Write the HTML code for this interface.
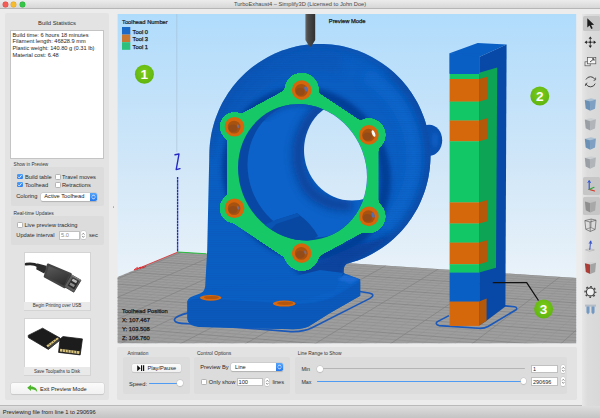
<!DOCTYPE html>
<html><head><meta charset="utf-8"><title>TurboExhaust4 – Simplify3D</title>
<style>
html,body{margin:0;padding:0;}
body{width:600px;height:418px;overflow:hidden;background:#ececec;font-family:"Liberation Sans",sans-serif;color:#222;position:relative;}
.abs{position:absolute;}
.t{position:absolute;white-space:nowrap;line-height:1;}

.tb{left:0;top:0;width:600px;height:9px;background:linear-gradient(#ececec,#d7d7d7);border-bottom:1px solid #b6b6b6;box-sizing:border-box;}
.dot{position:absolute;width:5px;height:5px;border-radius:50%;top:1.9px;margin-left:0.2px;}
.gb{position:absolute;background:#e3e3e3;border-radius:2px;}
.gb2{position:absolute;background:#dcdcdc;border-radius:2px;}
.wb{position:absolute;background:#fff;border:0.6px solid #c4c4c4;box-sizing:border-box;}
.cb{position:absolute;width:5.6px;height:5.6px;border-radius:1.2px;box-sizing:border-box;}
.cb.on{background:linear-gradient(#4da0f8,#2a7df0);}
.cb.off{background:#fff;border:0.6px solid #b4b4b4;width:5.8px;height:5.8px;margin:-0.1px;}
.sel{position:absolute;background:#fff;border-radius:1.8px;box-shadow:0 0 0 0.5px #c2c2c2,0 0.5px 0.8px rgba(0,0,0,.25);}
.selb{position:absolute;right:0;top:0;bottom:0;width:7px;border-radius:0 1.8px 1.8px 0;background:linear-gradient(#55a4fa,#2478ee);}
.inp{position:absolute;background:#fff;border:0.5px solid #c0c0c0;box-sizing:border-box;}
.btn{position:absolute;background:linear-gradient(#fbfbfb,#f1f1f1);border-radius:1.8px;box-shadow:0 0 0 0.5px #cfcfcf,0 0.5px 0.7px rgba(0,0,0,.14);}
.knob{position:absolute;width:5.9px;height:5.9px;margin:0.55px;border-radius:50%;background:#fff;box-shadow:0 0 0 0.4px #c6c6c6,0 0.5px 1px rgba(0,0,0,.3);}
.stp{position:absolute;width:4.6px;height:8.6px;border-radius:1.5px;background:#fff;box-shadow:0 0 0 0.4px #c4c4c4,0 0.4px 0.6px rgba(0,0,0,.2);}

</style></head><body>
<div class="abs tb"></div>
<div class="dot" style="left:3.3px;background:#f45d56;box-shadow:0 0 0 0.4px #d9433d;"></div>
<div class="dot" style="left:11.3px;background:#f7bb2e;box-shadow:0 0 0 0.4px #d99f1f;"></div>
<div class="dot" style="left:19.9px;background:#35c648;box-shadow:0 0 0 0.4px #22a634;"></div>
<div class="t" style="left:200px;width:200px;text-align:center;top:2.01px;font-size:5.69px;color:#484848;font-weight:normal;">TurboExhaust4 – Simplify3D (Licensed to John Doe)</div>
<div class="gb" style="left:5px;top:13px;width:104px;height:386.5px;"></div>
<div class="t" style="left:-43px;width:200px;text-align:center;top:21.03px;font-size:5.84px;color:#2c2c2c;font-weight:normal;">Build Statistics</div>
<div class="wb" style="left:10.3px;top:29.5px;width:93.7px;height:129px;"></div>
<div class="t" style="left:12.6px;top:32.54px;font-size:5.65px;color:#1e1e1e;font-weight:normal;">Build time: 6 hours 18 minutes</div>
<div class="t" style="left:12.6px;top:39.24px;font-size:5.65px;color:#1e1e1e;font-weight:normal;">Filament length: 46828.9 mm</div>
<div class="t" style="left:12.6px;top:45.94px;font-size:5.65px;color:#1e1e1e;font-weight:normal;">Plastic weight: 140.80 g (0.31 lb)</div>
<div class="t" style="left:12.6px;top:52.64px;font-size:5.65px;color:#1e1e1e;font-weight:normal;">Material cost: 6.48</div>
<div class="t" style="left:13.5px;top:162.97px;font-size:4.7px;color:#333;font-weight:normal;">Show in Preview</div>
<div class="gb2" style="left:10.5px;top:167.3px;width:93.3px;height:38.7px;"></div>
<div class="cb on" style="left:17.2px;top:173.80px;"><svg class="abs" style="left:0;top:0" width="5.6" height="5.6" viewBox="0 0 56 56"><path d="M12 29 L23 41 L44 14" fill="none" stroke="#fff" stroke-width="8" stroke-linecap="round" stroke-linejoin="round"/></svg></div>
<div class="t" style="left:25px;top:174.71px;font-size:5.7px;color:#2a2a2a;font-weight:normal;">Build table</div>
<div class="cb off" style="left:54.8px;top:173.80px;"></div>
<div class="t" style="left:62px;top:174.71px;font-size:5.7px;color:#2a2a2a;font-weight:normal;">Travel moves</div>
<div class="cb on" style="left:17.2px;top:181.90px;"><svg class="abs" style="left:0;top:0" width="5.6" height="5.6" viewBox="0 0 56 56"><path d="M12 29 L23 41 L44 14" fill="none" stroke="#fff" stroke-width="8" stroke-linecap="round" stroke-linejoin="round"/></svg></div>
<div class="t" style="left:25px;top:182.81px;font-size:5.7px;color:#2a2a2a;font-weight:normal;">Toolhead</div>
<div class="cb off" style="left:54.8px;top:181.90px;"></div>
<div class="t" style="left:62px;top:182.81px;font-size:5.7px;color:#2a2a2a;font-weight:normal;">Retractions</div>
<div class="t" style="left:16.2px;top:194.41px;font-size:5.7px;color:#2a2a2a;font-weight:normal;">Coloring</div>
<div class="sel" style="left:40.8px;top:192.5px;width:56.2px;height:8px;"><div class="t" style="left:3.5px;top:1.81px;font-size:5.7px;color:#222;">Active Toolhead</div><div class="selb"><svg class="abs" style="left:0;top:0" width="7" height="8" viewBox="0 0 70 80"><path d="M22 32 L35 18 L48 32 M22 48 L35 62 L48 48" fill="none" stroke="#fff" stroke-width="8" stroke-linecap="round" stroke-linejoin="round"/></svg></div></div>
<div class="t" style="left:13.5px;top:211.98px;font-size:4.85px;color:#333;font-weight:normal;">Real-time Updates</div>
<div class="gb2" style="left:10.5px;top:216.3px;width:93.3px;height:29px;"></div>
<div class="cb off" style="left:17px;top:221.80px;"></div>
<div class="t" style="left:24.4px;top:222.71px;font-size:5.7px;color:#2a2a2a;font-weight:normal;">Live preview tracking</div>
<div class="t" style="left:16.3px;top:233.31px;font-size:5.7px;color:#2a2a2a;font-weight:normal;">Update interval</div>
<div class="inp" style="left:58.8px;top:230.7px;width:20.8px;height:9px;"></div>
<div class="t" style="left:61px;top:233.31px;font-size:5.7px;color:#8a8a8a;font-weight:normal;">5.0</div>
<div class="stp" style="left:81.2px;top:230.90px;"><svg class="abs" style="left:0;top:0" width="4.6" height="8.6" viewBox="0 0 46 86"><path d="M13 34 L23 22 L33 34 M13 52 L23 64 L33 52" fill="none" stroke="#555" stroke-width="6" stroke-linecap="round" stroke-linejoin="round"/></svg></div>
<div class="t" style="left:89px;top:233.31px;font-size:5.7px;color:#2a2a2a;font-weight:normal;">sec</div>
<div class="abs" style="left:23.5px;top:251.5px;width:67px;height:59.2px;background:#fff;border:1px solid #d4d4d4;box-sizing:border-box;"></div>
<div class="abs" style="left:24.1px;top:302px;width:65.8px;height:8.1px;background:#e9e9e9;"></div>
<div class="t" style="left:-43px;width:200px;text-align:center;top:304.48px;font-size:4.5px;color:#333;font-weight:normal;">Begin Printing over USB</div>
<svg class="abs" style="left:24px;top:252px" width="66" height="50" viewBox="0 0 66 50">
<defs><linearGradient id="ug" x1="0" y1="0" x2="0.4" y2="1"><stop offset="0" stop-color="#5e5e5e"/><stop offset="1" stop-color="#2e2e2e"/></linearGradient></defs>
<path d="M2.2 12.2 C7 11.4 11 12 14.5 14 C17.5 15.6 20 17.2 23 18" fill="none" stroke="#262626" stroke-width="2.8" stroke-linecap="round"/>
<path d="M13.5 12.2 L22 14.5 L20 20.6 L13 17 Z" fill="#2c2c2c" stroke="#2c2c2c" stroke-width="1.4" stroke-linejoin="round"/>
<path d="M24 12.6 L46.6 22 L40.6 35.2 L20.8 24.6 Z" fill="url(#ug)" stroke="#444" stroke-width="2.2" stroke-linejoin="round"/>
<path d="M47.2 22.6 L57 28.2 L49.8 40.2 L40.2 34.6 Z" fill="#5c5c5c" stroke="#333" stroke-width="0.8" stroke-linejoin="round"/>
<path d="M48.6 25.4 L55 29.1 L50.2 37.4 L43.6 33.6 Z" fill="#2a2a2a"/>
<path d="M48.9 26.6 L53.3 29.1 L52.1 31.2 L47.7 28.7 Z" fill="#b8b8b8"/>
<path d="M46.6 30.6 L51 33.1 L49.8 35.2 L45.4 32.7 Z" fill="#8a8a8a"/>
<path d="M47.4 23.1 L56.4 28.3" stroke="#a4a4a4" stroke-width="0.7"/>
</svg>
<div class="abs" style="left:23.5px;top:317.5px;width:67px;height:58.2px;background:#fff;border:1px solid #d4d4d4;box-sizing:border-box;"></div>
<div class="abs" style="left:24.1px;top:366.6px;width:65.8px;height:8.5px;background:#e9e9e9;"></div>
<div class="t" style="left:-43px;width:200px;text-align:center;top:369.75px;font-size:4.55px;color:#333;font-weight:normal;">Save Toolpaths to Disk</div>
<svg class="abs" style="left:24px;top:318px" width="66" height="48" viewBox="0 0 66 48">
<path d="M4.2 17.4 L18.6 10.2 L36 20 L35.4 22.6 L24.4 31.4 L4.4 19.6 Z" fill="#1c1c1c" stroke="#1c1c1c" stroke-width="0.8" stroke-linejoin="round"/>
<path d="M24.2 29 L35 20.6 L35.4 22.6 L24.6 31.2 Z" fill="#444"/>
<path d="M22.4 27.6 L33.4 19.6 L34.8 20.8 L23.8 29.2 Z" fill="#d9c47a"/>
<path d="M24.6 26 l1.1 1.3 M26.8 24.4 l1.1 1.3 M29 22.8 l1.1 1.3 M31.2 21.2 l1.1 1.3" stroke="#1c1c1c" stroke-width="0.6"/>
<path d="M39 18.6 L58.4 20.9 L56.2 36.9 L34.6 34.4 L36 21 Z" fill="#1c1c1c" stroke="#1c1c1c" stroke-width="0.8" stroke-linejoin="round"/>
<path d="M36.2 30.8 L55.6 33.2 L55.2 36 L35.8 33.6 Z" fill="#d9c47a"/>
<path d="M38.6 31.2 v2.8 M41.4 31.5 v2.8 M44.2 31.9 v2.8 M47 32.2 v2.8 M49.8 32.6 v2.8 M52.6 32.9 v2.8" stroke="#1c1c1c" stroke-width="0.6"/>
</svg>
<div class="btn" style="left:10.8px;top:383px;width:93px;height:10.6px;"></div>
<svg class="abs" style="left:26px;top:383px" width="13" height="11" viewBox="0 0 130 110"><path d="M12 48 L50 18 L50 36 C90 36 112 58 112 92 C100 70 84 62 50 62 L50 80 Z" fill="#4db52c"/></svg>
<div class="t" style="left:40px;top:386.64px;font-size:5.65px;color:#222;font-weight:normal;">Exit Preview Mode</div>
<div class="abs" style="left:0;top:405px;width:600px;height:13px;background:linear-gradient(#dedede,#c4c4c4);border-top:0.6px solid #b9b9b9;box-sizing:border-box;"></div>
<div class="t" style="left:2.8px;top:410.06px;font-size:5.78px;color:#222;font-weight:normal;">Previewing file from line 1 to 290696</div>
<div class="gb" style="left:117px;top:346.5px;width:459.5px;height:53px;background:#e2e2e2;"></div>
<div class="t" style="left:127.4px;top:352.27px;font-size:4.7px;color:#333;font-weight:normal;">Animation</div>
<div class="gb2" style="left:122.7px;top:356.5px;width:67.1px;height:37.1px;"></div>
<div class="btn" style="left:132.3px;top:364px;width:48.6px;height:8.4px;"></div>
<svg class="abs" style="left:136.6px;top:364.9px" width="8" height="6.6" viewBox="0 0 80 66"><path d="M2 3 L36 33 L2 63 Z M40 3 H52 V63 H40 Z M60 3 H72 V63 H60 Z" fill="#111"/></svg>
<div class="t" style="left:147.4px;top:366.31px;font-size:5.7px;color:#222;font-weight:normal;">Play/Pause</div>
<div class="t" style="left:129px;top:381.51px;font-size:5.7px;color:#2a2a2a;font-weight:normal;">Speed:</div>
<div class="abs" style="left:148.6px;top:382.6px;width:30px;height:1.9px;background:#4f9af2;border-radius:1px;"></div>
<div class="knob" style="left:176.8px;top:379.9px;"></div>
<div class="t" style="left:197px;top:352.13px;font-size:4.95px;color:#333;font-weight:normal;">Control Options</div>
<div class="gb2" style="left:194.2px;top:356.5px;width:95.7px;height:37.1px;"></div>
<div class="t" style="left:200.2px;top:364.91px;font-size:5.7px;color:#2a2a2a;font-weight:normal;">Preview By</div>
<div class="sel" style="left:231px;top:362.9px;width:51.6px;height:8px;"><div class="t" style="left:4px;top:1.81px;font-size:5.7px;color:#222;">Line</div><div class="selb"><svg class="abs" style="left:0;top:0" width="7" height="8" viewBox="0 0 70 80"><path d="M22 32 L35 18 L48 32 M22 48 L35 62 L48 48" fill="none" stroke="#fff" stroke-width="8" stroke-linecap="round" stroke-linejoin="round"/></svg></div></div>
<div class="cb off" style="left:201px;top:379.10px;"></div>
<div class="t" style="left:208.8px;top:380.01px;font-size:5.7px;color:#2a2a2a;font-weight:normal;">Only show</div>
<div class="inp" style="left:236.7px;top:377.6px;width:26.3px;height:8.4px;"></div>
<div class="t" style="left:238.5px;top:380.01px;font-size:5.7px;color:#222;font-weight:normal;">100</div>
<div class="stp" style="left:264.8px;top:377.60px;"><svg class="abs" style="left:0;top:0" width="4.6" height="8.6" viewBox="0 0 46 86"><path d="M13 34 L23 22 L33 34 M13 52 L23 64 L33 52" fill="none" stroke="#555" stroke-width="6" stroke-linecap="round" stroke-linejoin="round"/></svg></div>
<div class="t" style="left:272.4px;top:380.01px;font-size:5.7px;color:#2a2a2a;font-weight:normal;">lines</div>
<div class="t" style="left:297.8px;top:352.18px;font-size:4.85px;color:#333;font-weight:normal;">Line Range to Show</div>
<div class="gb2" style="left:295.2px;top:356.5px;width:272.3px;height:37.1px;"></div>
<div class="t" style="left:301.4px;top:367.13px;font-size:5.3px;color:#2a2a2a;font-weight:normal;">Min</div>
<div class="abs" style="left:320px;top:368.3px;width:205px;height:1.1px;background:#b5b5b5;border-radius:1px;"></div>
<div class="knob" style="left:316.5px;top:365.3px;"></div>
<div class="inp" style="left:530.5px;top:364.5px;width:27.5px;height:8.5px;"></div>
<div class="t" style="left:533px;top:367.02px;font-size:5.5px;color:#222;font-weight:normal;">1</div>
<div class="stp" style="left:560.5px;top:364.50px;"><svg class="abs" style="left:0;top:0" width="4.6" height="8.6" viewBox="0 0 46 86"><path d="M13 34 L23 22 L33 34 M13 52 L23 64 L33 52" fill="none" stroke="#555" stroke-width="6" stroke-linecap="round" stroke-linejoin="round"/></svg></div>
<div class="t" style="left:301.4px;top:379.73px;font-size:5.3px;color:#2a2a2a;font-weight:normal;">Max</div>
<div class="abs" style="left:317px;top:380.6px;width:204px;height:1.9px;background:#4f9af2;border-radius:1px;"></div>
<div class="knob" style="left:520px;top:377.9px;"></div>
<div class="inp" style="left:530.5px;top:377px;width:27.5px;height:8.5px;"></div>
<div class="t" style="left:533px;top:379.62px;font-size:5.5px;color:#222;font-weight:normal;">290696</div>
<div class="stp" style="left:560.5px;top:377.10px;"><svg class="abs" style="left:0;top:0" width="4.6" height="8.6" viewBox="0 0 46 86"><path d="M13 34 L23 22 L33 34 M13 52 L23 64 L33 52" fill="none" stroke="#555" stroke-width="6" stroke-linecap="round" stroke-linejoin="round"/></svg></div>
<div class="abs" style="left:112.9px;top:206.3px;width:1.6px;height:1.6px;border-radius:50%;background:#a8a8a8;"></div>
<div class="abs" style="left:582px;top:13.5px;width:18px;height:392px;background:linear-gradient(90deg,#e6e6e6,#dcdcdc 30%,#d8d8d8);"></div>
<div class="abs" style="left:582.7px;top:15.6px;width:17.3px;height:15.8px;background:#c6c6c6;border-radius:1.5px;"></div>
<div class="abs" style="left:582.7px;top:176.8px;width:17.3px;height:18.5px;background:#c6c6c6;border-radius:1.5px;"></div>
<div class="abs" style="left:582.7px;top:196.7px;width:17.3px;height:18.3px;background:#c6c6c6;border-radius:1.5px;"></div>
<svg class="abs" style="left:580px;top:13px" width="20" height="387" viewBox="580 13 20 387">
<path d="M587.3 18.2 L587.3 27.6 L589.6 25.6 L591.2 29 L592.7 28.3 L591.1 25 L594.1 24.8 Z" fill="#1c1c1c"/>
<g fill="#222" stroke="#222" stroke-width="0.7"><path d="M590.3 36.4 L592 38.8 H588.6 Z M590.3 48 L592 45.6 H588.6 Z M584.5 42.2 L586.9 40.5 V43.9 Z M596.1 42.2 L593.7 40.5 V43.9 Z" stroke="none"/><path d="M590.3 38.5 V45.9 M586.6 42.2 H594"/><circle cx="590.3" cy="42.2" r="1" stroke="none"/></g>
<g fill="none" stroke="#555" stroke-width="0.7"><rect x="585" y="61.8" width="5.2" height="4" fill="#e8e8e8"/><rect x="587.6" y="57.4" width="8.2" height="6.4" fill="#f4f4f4"/><path d="M590 62 L593.8 59" stroke="#222" stroke-width="0.8"/><path d="M592 58.8 H594 V60.8" stroke="#222" stroke-width="0.8"/></g>
<g fill="none" stroke="#444" stroke-width="1"><path d="M586 79.5 A5 5 0 0 1 595 79.6"/><path d="M595.2 83.6 A5 5 0 0 1 586 84"/><path d="M593.6 80.6 L595.6 79.8 L595.6 77.6" stroke-width="0.8"/><path d="M587.4 83 L585.6 83.8 L585.4 86" stroke-width="0.8"/></g>
<g transform="translate(590.3,104.5) scale(1.28)"><path d="M-4.3 -3.6 L0.6 -4.8 L4.4 -3.9 L-0.3 -2.5 Z" fill="#adc2d4"/><path d="M-4.3 -3.6 L-0.3 -2.5 L-0.1 4.9 L-3.6 3.2 Z" fill="#6a90b6"/><path d="M-0.3 -2.5 L4.4 -3.9 L3.7 3.3 L-0.1 4.9 Z" fill="#7fa0c2"/></g>
<g transform="translate(590.3,124.2) scale(1.28)"><path d="M-4.3 -3.6 L0.6 -4.8 L4.4 -3.9 L-0.3 -2.5 Z" fill="#cdd0d3"/><path d="M-4.3 -3.6 L-0.3 -2.5 L-0.1 4.9 L-3.6 3.2 Z" fill="#9a9fa5"/><path d="M-0.3 -2.5 L4.4 -3.9 L3.7 3.3 L-0.1 4.9 Z" fill="#b1b5ba"/></g>
<g transform="translate(590.3,143.4) scale(1.28)"><path d="M-4.3 -3.6 L0.6 -4.8 L4.4 -3.9 L-0.3 -2.5 Z" fill="#adc2d4"/><path d="M-4.3 -3.6 L-0.3 -2.5 L-0.1 4.9 L-3.6 3.2 Z" fill="#6a90b6"/><path d="M-0.3 -2.5 L4.4 -3.9 L3.7 3.3 L-0.1 4.9 Z" fill="#7fa0c2"/></g>
<g transform="translate(590.3,162.4) scale(1.28)"><path d="M-4.3 -3.6 L0.6 -4.8 L4.4 -3.9 L-0.3 -2.5 Z" fill="#cdd0d3"/><path d="M-4.3 -3.6 L-0.3 -2.5 L-0.1 4.9 L-3.6 3.2 Z" fill="#9a9fa5"/><path d="M-0.3 -2.5 L4.4 -3.9 L3.7 3.3 L-0.1 4.9 Z" fill="#b1b5ba"/></g>
<g fill="none" stroke-width="1.1" stroke-linecap="round"><path d="M589.2 189.4 V181.2" stroke="#2a4fd0"/><path d="M589.2 189.4 L594.6 191" stroke="#d23a2a"/><path d="M589.2 189.4 L594 187.2" stroke="#2aa83a"/><path d="M587.9 182.6 L589.2 180.4 L590.5 182.6" stroke="#2a4fd0" stroke-width="0.8"/></g>
<g transform="translate(590.4,206.2) scale(1.28)"><path d="M-4.3 -3.6 L0.6 -4.8 L4.4 -3.9 L-0.3 -2.5 Z" fill="#c2c2c2"/><path d="M-4.3 -3.6 L-0.3 -2.5 L-0.1 4.9 L-3.6 3.2 Z" fill="#8e8e8e"/><path d="M-0.3 -2.5 L4.4 -3.9 L3.7 3.3 L-0.1 4.9 Z" fill="#a8a8a8"/></g>
<g transform="translate(590.4,225.2) scale(1.28)" fill="none" stroke="#555" stroke-width="0.5"><path d="M-4.3 -3.6 L0.6 -4.8 L4.4 -3.9 L-0.3 -2.5 Z"/><path d="M-4.3 -3.6 L-3.6 3.2 L-0.1 4.9 L-0.3 -2.5"/><path d="M4.4 -3.9 L3.7 3.3 L-0.1 4.9"/><path d="M0.6 -4.8 L0.4 1.8 L-3.6 3.2 M0.4 1.8 L3.7 3.3" stroke-width="0.4"/></g>
<g fill="none" stroke-linecap="round"><path d="M585.8 249.8 L590 248.6 L594.4 250 L590 251.2 Z" stroke="#9a9a9a" stroke-width="0.4" fill="#d4d4d4"/><path d="M589.8 249.6 L590.6 241.6" stroke="#2c48c8" stroke-width="0.9"/><path d="M589.3 243.4 L590.7 240.8 L591.7 243.6" stroke="#2c48c8" stroke-width="0.8"/></g>
<g transform="translate(590.4,267.8) scale(1.28)"><path d="M-4.3 -3.6 L0.6 -4.8 L4.4 -3.9 L-0.3 -2.5 Z" fill="#d4d4d4"/><path d="M-4.3 -3.6 L-0.3 -2.5 L-0.1 4.9 L-3.6 3.2 Z" fill="#ac3c36"/><path d="M-0.3 -2.5 L4.4 -3.9 L3.7 3.3 L-0.1 4.9 Z" fill="#a4a4a4"/></g>
<g transform="translate(590.4,291.9)"><circle r="4" fill="#f0f0f0" stroke="#444" stroke-width="1.15"/><circle r="5.3" fill="none" stroke="#444" stroke-width="1.4" stroke-dasharray="1.85 2.31" stroke-dashoffset="0.9"/></g>
<g><path d="M585 304.6 H596 V306.6 H585 Z" fill="#b4bcc6"/><path d="M586.4 306.6 H589.6 V312.6 L588 314.4 L586.4 312.6 Z M591.4 306.6 H594.6 V312.6 L593 314.4 L591.4 312.6 Z" fill="#7ea0c6"/><path d="M588 306.6 V313 M593 306.6 V313" stroke="#5580b0" stroke-width="0.5"/></g>
</svg>
<svg class="abs" style="left:0;top:0" width="600" height="418" viewBox="0 0 600 418">
<defs>
<clipPath id="vw"><rect x="117.6" y="14" width="458.6" height="329.3"/></clipPath>
<pattern id="lay" width="4" height="2.2" patternUnits="userSpaceOnUse"><rect width="4" height="0.9" fill="#04306e"/></pattern>
<linearGradient id="sky" gradientUnits="userSpaceOnUse" x1="0" y1="14" x2="0" y2="275"><stop offset="0" stop-color="#b0dcfc"/><stop offset="0.55" stop-color="#cfe6f8"/><stop offset="1" stop-color="#e9f2f9"/></linearGradient>
<linearGradient id="noz" x1="0" y1="0" x2="1" y2="0"><stop offset="0" stop-color="#6a6a6a"/><stop offset="0.25" stop-color="#4c4c4c"/><stop offset="1" stop-color="#303030"/></linearGradient>
<filter id="goo" x="-10%" y="-10%" width="120%" height="120%"><feGaussianBlur stdDeviation="1.8"/><feColorMatrix values="1 0 0 0 0 0 1 0 0 0 0 0 1 0 0 0 0 0 22 -10.5"/></filter>
<filter id="b1" x="-20%" y="-20%" width="140%" height="140%"><feGaussianBlur stdDeviation="1"/></filter>
<filter id="b2" x="-20%" y="-20%" width="140%" height="140%"><feGaussianBlur stdDeviation="2.2"/></filter>
<filter id="b4" x="-30%" y="-30%" width="160%" height="160%"><feGaussianBlur stdDeviation="4.5"/></filter>
<filter id="b7" x="-30%" y="-30%" width="160%" height="160%"><feGaussianBlur stdDeviation="7"/></filter>
<radialGradient id="num" cx="0.5" cy="0.4" r="0.6"><stop offset="0" stop-color="#7ccc1c"/><stop offset="1" stop-color="#5fb40e"/></radialGradient>
</defs>
<g clip-path="url(#vw)">
<rect x="117" y="13" width="460" height="331" fill="url(#sky)"/>
<path d="M176.8 14 V152" stroke="#9fb4c8" stroke-width="0.6" opacity="0.8"/>
<clipPath id="flc"><path d="M178 252 L577 278 L577 344 L117 344 L117 277.2 Z"/></clipPath>
<g clip-path="url(#flc)">
<rect x="117" y="250" width="460" height="95" fill="#9e9e9e"/>
<path d="M173.4 253.9L712.7 289.1M168.7 255.9L710.6 291.5M163.9 257.8L708.5 293.8M159.1 259.8L706.3 296.2M149.4 263.8L701.9 301.0M144.4 265.9L699.7 303.5M139.4 268.0L697.5 306.0M134.4 270.0L695.2 308.5M124.1 274.3L690.6 313.6M118.9 276.4L688.2 316.2M113.6 278.6L685.8 318.9M108.3 280.8L683.4 321.5M97.4 285.3L678.5 327.0M91.9 287.6L676.0 329.7M86.3 289.9L673.5 332.5M80.7 292.2L670.9 335.4M69.2 297.0L665.7 341.2M63.4 299.4L663.0 344.1M57.5 301.8L660.3 347.1M51.5 304.3L657.6 350.1M39.3 309.3L652.0 356.3M33.2 311.9L649.2 359.4M26.9 314.5L646.3 362.6M20.6 317.1L643.4 365.9M7.7 322.4L637.4 372.4M1.1 325.1L634.4 375.8M-5.5 327.9L631.3 379.2M-12.3 330.7L628.2 382.7M-26.0 336.3L621.8 389.7M-33.0 339.2L618.6 393.3M-40.0 342.1L615.3 397.0M-47.2 345.1L611.9 400.7M-61.8 351.1L605.1 408.2M-69.2 354.2L601.6 412.1M-76.8 357.3L598.0 416.0M-84.4 360.5L594.4 420.0M-100.0 366.9L587.1 428.1M-108.0 370.2L583.3 432.3M-116.0 373.6L579.5 436.5M-124.2 376.9L575.6 440.8M-140.8 383.8L567.7 449.6M-149.3 387.3L563.6 454.1M-158.0 390.9L559.5 458.7M-166.7 394.5L555.3 463.3M-184.6 401.9L546.7 472.8M-193.7 405.7L542.4 477.7M-203.0 409.5L537.9 482.6M-212.4 413.4L533.3 487.6M-231.6 421.3L524.0 498.0M-241.4 425.4L519.2 503.3M-251.4 429.5L514.4 508.6M-261.5 433.7L509.4 514.1M-282.2 442.3L499.3 525.3" stroke="#8b8b8b" stroke-width="0.55" fill="none"/>
<path d="M188.4 252.7L-274.8 446.7M195.2 253.1L-265.3 447.7M202.1 253.6L-255.6 448.8M209.1 254.0L-245.8 449.8M223.5 255.0L-225.6 452.0M230.8 255.4L-215.3 453.1M238.3 255.9L-204.8 454.2M245.9 256.4L-194.1 455.4M261.4 257.4L-172.2 457.7M269.4 257.9L-160.9 458.9M277.5 258.5L-149.4 460.1M285.7 259.0L-137.8 461.4M302.6 260.1L-113.8 464.0M311.2 260.6L-101.5 465.3M320.0 261.2L-88.9 466.6M329.0 261.8L-76.2 468.0M347.3 263.0L-49.9 470.8M356.7 263.6L-36.3 472.2M366.3 264.2L-22.5 473.7M376.1 264.9L-8.5 475.2M396.1 266.2L20.5 478.3M406.4 266.8L35.5 479.9M416.9 267.5L50.7 481.6M427.6 268.2L66.3 483.2M449.6 269.6L98.4 486.7M460.9 270.4L115.0 488.4M472.5 271.1L131.9 490.2M484.2 271.9L149.2 492.1M508.5 273.4L185.0 495.9M521.0 274.3L203.4 497.9M533.7 275.1L222.4 499.9M546.7 275.9L241.7 502.0M573.6 277.7L281.8 506.3M587.4 278.6L302.5 508.5M601.6 279.5L323.8 510.8M616.0 280.4L345.6 513.1" stroke="#939393" stroke-width="0.4" fill="none"/>
<path d="M178.0 252.0L714.8 286.8M154.3 261.8L704.1 298.6M129.3 272.2L692.9 311.0M102.9 283.1L681.0 324.2M75.0 294.6L668.3 338.3M45.5 306.8L654.8 353.2M14.2 319.7L640.4 369.1M-19.1 333.5L625.0 386.2M-54.4 348.1L608.5 404.4M-92.2 363.7L590.8 424.0M-132.4 380.4L571.7 445.2M-175.6 398.2L551.1 468.0M-221.9 417.3L528.7 492.8M-271.8 438.0L504.4 519.7M181.6 252.2L-284.2 445.7M216.2 254.5L-235.8 450.9M253.6 256.9L-183.2 456.5M294.1 259.5L-125.9 462.7M338.0 262.4L-63.1 469.4M386.0 265.5L5.9 476.8M438.5 268.9L82.2 484.9M496.2 272.7L166.9 494.0M560.0 276.8L261.5 504.1M630.8 281.4L367.9 515.5" stroke="#818181" stroke-width="0.7" fill="none"/>
</g>
<path d="M178 252 L134.3 270.1" stroke="#e0282c" stroke-width="0.8"/>
<path d="M134 269.8 l3.4 -2.4 l-0.6 2 l3.6 -2.4 l-0.4 1.6 l3.4 -2 l-0.6 1.4 l3.4 -1.8" stroke="#e0282c" stroke-width="0.9" fill="none" stroke-linejoin="round"/>
<path d="M178 252 L206.5 253.8" stroke="#18c030" stroke-width="0.9"/>
<path d="M177.6 177 V252" stroke="#2428c4" stroke-width="1.35" stroke-dasharray="2.6 0.5"/>
<path d="M175 154.8 L179 154 L176.2 169.6 L180 168.6" stroke="#2428c4" stroke-width="1.4" fill="none" stroke-linejoin="round" stroke-linecap="round"/>
<g fill="none" stroke="#1a58ba" stroke-width="1.6" stroke-linejoin="round">
<path d="M189 312.6 C181 314.5 173.2 317.6 174.6 320.6 C175.8 323.2 181 323.3 188 323.7 L288 331.4 C299 332.2 305 331.2 312 327.8 L369.5 298.6 C374 296.4 374 293.8 369 293 L358 291.2"/>
<path d="M449 315.6 L437.4 321.6 C435.6 322.8 436 324.6 439 325.6 L478.5 328.3 C483 328.6 485 328.2 488 326.5 L515.6 310 C517.4 308.8 517 307.3 514.6 306.8 L503 305.6"/>
</g>
<clipPath id="bodyc"><path d="M209.3 155.5 L209.4 151.6 L209.6 147.7 L209.9 143.8 L210.4 140.0 L211.0 136.1 L211.7 132.3 L212.6 128.5 L213.6 124.7 L214.7 121.0 L216.0 117.3 L217.4 113.7 L218.9 110.1 L220.5 106.6 L222.2 103.1 L224.1 99.7 L226.1 96.4 L228.2 93.1 L230.4 89.9 L232.7 86.8 L235.2 83.8 L237.7 80.8 L240.3 78.0 L243.1 75.2 L245.9 72.6 L248.8 70.0 L251.8 67.6 L254.9 65.2 L258.1 63.0 L261.3 60.9 L264.6 58.9 L268.0 57.0 L271.4 55.2 L274.9 53.5 L278.5 52.0 L282.1 50.6 L285.7 49.4 L289.4 48.2 L293.1 47.2 L296.9 46.3 L300.7 45.6 L304.5 45.0 L308.3 44.5 L312.2 44.2 L316.0 44.0 L319.9 43.9 L323.8 44.0 L327.6 44.2 L331.5 44.5 L335.3 45.0 L339.1 45.6 L342.9 46.3 L346.7 47.2 L350.4 48.2 L354.1 49.4 L357.7 50.6 L361.3 52.0 L364.9 53.5 L368.4 55.2 L371.8 57.0 L375.2 58.9 L378.5 60.9 L381.7 63.0 L384.9 65.2 L388.0 67.6 L391.0 70.0 L393.9 72.6 L396.7 75.2 L399.5 78.0 L402.1 80.8 L404.6 83.8 L407.1 86.8 L409.4 89.9 L411.6 93.1 L413.7 96.4 L415.7 99.7 L417.6 103.1 L419.3 106.6 L420.9 110.1 L422.4 113.7 L423.8 117.3 L425.1 121.0 L426.2 124.7 L427.2 128.5 L428.1 132.3 L428.8 136.1 L429.4 140.0 L429.9 143.8 L430.2 147.7 L430.4 151.6 L430.5 155.5 L430.4 159.4 L430.2 163.3 L429.9 167.2 L429.4 171.0 L428.8 174.9 L428.1 178.7 L427.2 182.5 L426.2 186.3 L425.1 190.0 L423.8 193.7 L422.4 197.3 L420.9 200.9 L419.3 204.4 L417.6 207.9 L415.7 211.3 L413.7 214.6 L411.6 217.9 L409.4 221.1 L407.1 224.2 L404.6 227.2 L402.1 230.2 L399.5 233.0 L396.7 235.8 L393.9 238.4 L391.0 241.0 L388.0 243.4 L384.9 245.8 L381.7 248.0 L378.5 250.1 L375.2 252.1 L371.8 254.0 L368.4 255.8 L364.9 257.5 L361.3 259.0 L357.7 260.4 L354.1 261.6 L350.4 262.8 L346.7 263.8 L346.7 263.8 C346.2 264.3 344.7 265.5 344.2 267.0 C343.7 268.5 343.8 272.0 343.7 273.0 L345 273.7 L360.2 279.2 L360.2 295.7 L330 313 L309.3 326 Q303 329.4 293 329.3 L200 326.9 Q188 326.4 187.4 319 L187.4 301.5 Q187.8 298.4 192 296.6 L200 293.4 Q205 291.4 205.2 286 L207.2 250 Z"/></clipPath>
<ellipse cx="429.2" cy="140.3" rx="13" ry="15.6" fill="#0a50b0"/>
<ellipse cx="435" cy="140" rx="3.2" ry="8" fill="#0f62c8" filter="url(#b2)" opacity="0.8"/>
<path d="M209.3 155.5 L209.4 151.6 L209.6 147.7 L209.9 143.8 L210.4 140.0 L211.0 136.1 L211.7 132.3 L212.6 128.5 L213.6 124.7 L214.7 121.0 L216.0 117.3 L217.4 113.7 L218.9 110.1 L220.5 106.6 L222.2 103.1 L224.1 99.7 L226.1 96.4 L228.2 93.1 L230.4 89.9 L232.7 86.8 L235.2 83.8 L237.7 80.8 L240.3 78.0 L243.1 75.2 L245.9 72.6 L248.8 70.0 L251.8 67.6 L254.9 65.2 L258.1 63.0 L261.3 60.9 L264.6 58.9 L268.0 57.0 L271.4 55.2 L274.9 53.5 L278.5 52.0 L282.1 50.6 L285.7 49.4 L289.4 48.2 L293.1 47.2 L296.9 46.3 L300.7 45.6 L304.5 45.0 L308.3 44.5 L312.2 44.2 L316.0 44.0 L319.9 43.9 L323.8 44.0 L327.6 44.2 L331.5 44.5 L335.3 45.0 L339.1 45.6 L342.9 46.3 L346.7 47.2 L350.4 48.2 L354.1 49.4 L357.7 50.6 L361.3 52.0 L364.9 53.5 L368.4 55.2 L371.8 57.0 L375.2 58.9 L378.5 60.9 L381.7 63.0 L384.9 65.2 L388.0 67.6 L391.0 70.0 L393.9 72.6 L396.7 75.2 L399.5 78.0 L402.1 80.8 L404.6 83.8 L407.1 86.8 L409.4 89.9 L411.6 93.1 L413.7 96.4 L415.7 99.7 L417.6 103.1 L419.3 106.6 L420.9 110.1 L422.4 113.7 L423.8 117.3 L425.1 121.0 L426.2 124.7 L427.2 128.5 L428.1 132.3 L428.8 136.1 L429.4 140.0 L429.9 143.8 L430.2 147.7 L430.4 151.6 L430.5 155.5 L430.4 159.4 L430.2 163.3 L429.9 167.2 L429.4 171.0 L428.8 174.9 L428.1 178.7 L427.2 182.5 L426.2 186.3 L425.1 190.0 L423.8 193.7 L422.4 197.3 L420.9 200.9 L419.3 204.4 L417.6 207.9 L415.7 211.3 L413.7 214.6 L411.6 217.9 L409.4 221.1 L407.1 224.2 L404.6 227.2 L402.1 230.2 L399.5 233.0 L396.7 235.8 L393.9 238.4 L391.0 241.0 L388.0 243.4 L384.9 245.8 L381.7 248.0 L378.5 250.1 L375.2 252.1 L371.8 254.0 L368.4 255.8 L364.9 257.5 L361.3 259.0 L357.7 260.4 L354.1 261.6 L350.4 262.8 L346.7 263.8 L346.7 263.8 C346.2 264.3 344.7 265.5 344.2 267.0 C343.7 268.5 343.8 272.0 343.7 273.0 L345 273.7 L360.2 279.2 L360.2 295.7 L330 313 L309.3 326 Q303 329.4 293 329.3 L200 326.9 Q188 326.4 187.4 319 L187.4 301.5 Q187.8 298.4 192 296.6 L200 293.4 Q205 291.4 205.2 286 L207.2 250 Z" fill="#0a5fc4"/>
<g clip-path="url(#bodyc)">
<path d="M209.3 155.5 L209.4 151.6 L209.6 147.7 L209.9 143.8 L210.4 140.0 L211.0 136.1 L211.7 132.3 L212.6 128.5 L213.6 124.7 L214.7 121.0 L216.0 117.3 L217.4 113.7 L218.9 110.1 L220.5 106.6 L222.2 103.1 L224.1 99.7 L226.1 96.4 L228.2 93.1 L230.4 89.9 L232.7 86.8 L235.2 83.8 L237.7 80.8 L240.3 78.0 L243.1 75.2 L245.9 72.6 L248.8 70.0 L251.8 67.6 L254.9 65.2 L258.1 63.0 L261.3 60.9 L264.6 58.9 L268.0 57.0 L271.4 55.2 L274.9 53.5 L278.5 52.0 L282.1 50.6 L285.7 49.4 L289.4 48.2 L293.1 47.2 L296.9 46.3 L300.7 45.6 L304.5 45.0 L308.3 44.5 L312.2 44.2 L316.0 44.0 L319.9 43.9 L323.8 44.0 L327.6 44.2 L331.5 44.5 L335.3 45.0 L339.1 45.6 L342.9 46.3 L346.7 47.2 L350.4 48.2 L354.1 49.4 L357.7 50.6 L361.3 52.0 L364.9 53.5 L368.4 55.2 L371.8 57.0 L375.2 58.9 L378.5 60.9 L381.7 63.0 L384.9 65.2 L388.0 67.6 L391.0 70.0 L393.9 72.6 L396.7 75.2 L399.5 78.0 L402.1 80.8 L404.6 83.8 L407.1 86.8 L409.4 89.9 L411.6 93.1 L413.7 96.4 L415.7 99.7 L417.6 103.1 L419.3 106.6 L420.9 110.1 L422.4 113.7 L423.8 117.3 L425.1 121.0 L426.2 124.7 L427.2 128.5 L428.1 132.3 L428.8 136.1 L429.4 140.0 L429.9 143.8 L430.2 147.7 L430.4 151.6 L430.5 155.5 L430.4 159.4 L430.2 163.3 L429.9 167.2 L429.4 171.0 L428.8 174.9 L428.1 178.7 L427.2 182.5 L426.2 186.3 L425.1 190.0 L423.8 193.7 L422.4 197.3 L420.9 200.9 L419.3 204.4 L417.6 207.9 L415.7 211.3 L413.7 214.6 L411.6 217.9 L409.4 221.1 L407.1 224.2 L404.6 227.2 L402.1 230.2 L399.5 233.0 L396.7 235.8 L393.9 238.4 L391.0 241.0 L388.0 243.4 L384.9 245.8 L381.7 248.0 L378.5 250.1 L375.2 252.1 L371.8 254.0 L368.4 255.8 L364.9 257.5 L361.3 259.0 L357.7 260.4 L354.1 261.6 L350.4 262.8 L346.7 263.8 L346.7 263.8" fill="none" stroke="#084ca6" stroke-width="9" filter="url(#b4)" opacity="0.6"/>
<path d="M391.0 70.0 C392.7 71.7 398.2 76.5 401.4 80.1 C404.7 83.7 407.7 87.5 410.5 91.5 C413.3 95.5 415.8 99.7 418.0 104.0 C420.2 108.3 422.2 112.8 423.8 117.3 C425.5 121.9 426.8 126.6 427.9 131.3 C428.9 136.1 429.7 140.9 430.1 145.8 C430.5 150.6 430.6 155.5 430.4 160.4 C430.2 165.2 429.7 170.1 428.8 174.9 C428.0 179.7 426.8 184.4 425.4 189.1 C423.9 193.7 422.2 198.3 420.1 202.7 C418.1 207.1 415.8 211.4 413.2 215.5 C410.6 219.6 407.7 223.5 404.6 227.2 C401.5 231.0 398.2 234.5 394.6 237.8 C391.1 241.1 387.3 244.1 383.3 246.9 C379.4 249.7 375.2 252.2 371.0 254.5 C366.7 256.7 359.9 259.4 357.7 260.4" fill="none" stroke="#084ca6" stroke-width="15" filter="url(#b4)" opacity="0.7"/>
<path d="M365.2 75.0 C367.0 76.1 372.5 79.3 375.9 81.8 C379.3 84.3 382.5 87.1 385.6 90.1 C388.6 93.0 391.5 96.2 394.1 99.6 C396.7 102.9 399.1 106.5 401.2 110.2 C403.3 113.9 405.2 117.8 406.9 121.7 C408.5 125.7 409.8 129.8 410.9 133.9 C412.0 138.0 412.8 142.3 413.3 146.5 C413.8 150.8 414.1 155.1 414.0 159.4 C413.9 163.7 413.6 168.0 412.9 172.2 C412.3 176.5 411.4 180.7 410.2 184.8 C409.0 188.9 407.5 193.0 405.8 196.9 C404.0 200.8 402.0 204.6 399.8 208.2 C397.5 211.8 395.0 215.3 392.3 218.6 C389.6 221.9 385.0 226.3 383.6 227.9" fill="none" stroke="#0f69cf" stroke-width="15" filter="url(#b4)" opacity="0.7"/>
<path d="M221.3 134.4 C222.0 132.3 223.8 126.1 225.5 122.1 C227.1 118.1 229.0 114.2 231.1 110.5 C233.3 106.8 235.7 103.1 238.3 99.7 C240.8 96.3 243.7 93.0 246.7 90.0 C249.7 87.0 253.0 84.1 256.3 81.5 C259.7 78.8 263.3 76.4 267.0 74.3 C270.7 72.1 274.6 70.2 278.5 68.5 C282.4 66.9 286.5 65.5 290.6 64.4 C294.8 63.3 299.0 62.4 303.2 61.8 C307.4 61.3 311.7 61.0 316.0 61.0 C320.3 61.0 324.6 61.3 328.8 61.8 C333.0 62.4 339.3 64.0 341.4 64.4" fill="none" stroke="#0850ae" stroke-width="22" filter="url(#b4)" opacity="0.35"/>
<ellipse cx="0" cy="0" rx="79" ry="81.5" transform="matrix(1 0.07 0 1 306.4 173.8)" fill="none" stroke="#063b92" stroke-width="11" filter="url(#b2)" opacity="0.85"/>
<path d="M292 268 L326 258 L358 244 L392 236 L378 247 L346 266 L343 274 L352 279 L336 288 L310 283 Z" fill="#07429c" filter="url(#b2)" opacity="0.9"/>
<path d="M187 301 L196 296.8 L206 292 L206 296 Q240 300 290 304 Q315 305 332 298 L346 290 L361 281 L361 297 L330 314 L309 327 L293 330 L200 328 L187 322 Z" fill="#0a59bc"/>
<path d="M188 300.5 Q192 297 200 294.5 L206 292.5 L300 297 L330 287 L344 274.5 L360 279.6 L347 288 L332 296.5 Q318 303.6 292 303.4 Q240 301 200 298.6 Q192 298.6 188 302 Z" fill="#0b61c7"/>
<path d="M206 290 L206 297 L300 301 L335 290 L343 273 L320 270 L300 275 Z" fill="#0a5fc4"/>
<path d="M344.6 274.4 L359.6 278.6 L351 283.6 L337.5 279.6 Z" fill="#1a6cd6" filter="url(#b1)"/>
</g>
<path d="M209.3 155.5 L209.4 151.6 L209.6 147.7 L209.9 143.8 L210.4 140.0 L211.0 136.1 L211.7 132.3 L212.6 128.5 L213.6 124.7 L214.7 121.0 L216.0 117.3 L217.4 113.7 L218.9 110.1 L220.5 106.6 L222.2 103.1 L224.1 99.7 L226.1 96.4 L228.2 93.1 L230.4 89.9 L232.7 86.8 L235.2 83.8 L237.7 80.8 L240.3 78.0 L243.1 75.2 L245.9 72.6 L248.8 70.0 L251.8 67.6 L254.9 65.2 L258.1 63.0 L261.3 60.9 L264.6 58.9 L268.0 57.0 L271.4 55.2 L274.9 53.5 L278.5 52.0 L282.1 50.6 L285.7 49.4 L289.4 48.2 L293.1 47.2 L296.9 46.3 L300.7 45.6 L304.5 45.0 L308.3 44.5 L312.2 44.2 L316.0 44.0 L319.9 43.9 L323.8 44.0 L327.6 44.2 L331.5 44.5 L335.3 45.0 L339.1 45.6 L342.9 46.3 L346.7 47.2 L350.4 48.2 L354.1 49.4 L357.7 50.6 L361.3 52.0 L364.9 53.5 L368.4 55.2 L371.8 57.0 L375.2 58.9 L378.5 60.9 L381.7 63.0 L384.9 65.2 L388.0 67.6 L391.0 70.0 L393.9 72.6 L396.7 75.2 L399.5 78.0 L402.1 80.8 L404.6 83.8 L407.1 86.8 L409.4 89.9 L411.6 93.1 L413.7 96.4 L415.7 99.7 L417.6 103.1 L419.3 106.6 L420.9 110.1 L422.4 113.7 L423.8 117.3 L425.1 121.0 L426.2 124.7 L427.2 128.5 L428.1 132.3 L428.8 136.1 L429.4 140.0 L429.9 143.8 L430.2 147.7 L430.4 151.6 L430.5 155.5 L430.4 159.4 L430.2 163.3 L429.9 167.2 L429.4 171.0 L428.8 174.9 L428.1 178.7 L427.2 182.5 L426.2 186.3 L425.1 190.0 L423.8 193.7 L422.4 197.3 L420.9 200.9 L419.3 204.4 L417.6 207.9 L415.7 211.3 L413.7 214.6 L411.6 217.9 L409.4 221.1 L407.1 224.2 L404.6 227.2 L402.1 230.2 L399.5 233.0 L396.7 235.8 L393.9 238.4 L391.0 241.0 L388.0 243.4 L384.9 245.8 L381.7 248.0 L378.5 250.1 L375.2 252.1 L371.8 254.0 L368.4 255.8 L364.9 257.5 L361.3 259.0 L357.7 260.4 L354.1 261.6 L350.4 262.8 L346.7 263.8 L346.7 263.8 C346.2 264.3 344.7 265.5 344.2 267.0 C343.7 268.5 343.8 272.0 343.7 273.0 L345 273.7 L360.2 279.2 L360.2 295.7 L330 313 L309.3 326 Q303 329.4 293 329.3 L200 326.9 Q188 326.4 187.4 319 L187.4 301.5 Q187.8 298.4 192 296.6 L200 293.4 Q205 291.4 205.2 286 L207.2 250 Z" fill="url(#lay)" opacity="0.09"/>
<ellipse cx="210.7" cy="297.8" rx="10.8" ry="2.9" fill="#d8690e"/><ellipse cx="211.5" cy="297.5" rx="7.5" ry="1.6" fill="#b4560c"/>
<ellipse cx="284.3" cy="303.6" rx="11.4" ry="3" fill="#d8690e"/><ellipse cx="285.2" cy="303.3" rx="8" ry="1.7" fill="#b4560c"/>
<g filter="url(#goo)" fill="#12c866" stroke="#12c866" stroke-linecap="round">
<ellipse cx="0" cy="0" rx="73.5" ry="76" transform="matrix(1 0.07 0 1 302.8 172.3)" stroke="none"/>
<path d="M301.7 90.1L368.9 134.9" stroke-width="14.4" fill="none"/>
<path d="M368.9 134.9L368.9 216.4" stroke-width="19.2" fill="none"/>
<path d="M368.9 216.4L301.7 253.1" stroke-width="22.4" fill="none"/>
<path d="M301.7 253.1L234.5 208.3" stroke-width="26.6" fill="none"/>
<path d="M234.5 208.3L234.5 126.8" stroke-width="14.8" fill="none"/>
<path d="M234.5 126.8L301.7 90.1" stroke-width="16.4" fill="none"/>
<circle cx="301.7" cy="90.1" r="17.3" stroke="none"/>
<circle cx="368.9" cy="134.9" r="16.8" stroke="none"/>
<circle cx="368.9" cy="216.4" r="16.8" stroke="none"/>
<circle cx="301.7" cy="253.1" r="18" stroke="none"/>
<circle cx="234.5" cy="208.3" r="15" stroke="none"/>
<circle cx="234.5" cy="126.8" r="14.8" stroke="none"/>
</g>
<clipPath id="borec"><ellipse cx="0" cy="0" rx="64.5" ry="68" transform="matrix(1 0.07 0 1 302.5 172.3)"/></clipPath>
<g clip-path="url(#borec)">
<rect x="230" y="95" width="150" height="155" fill="#0848a4"/>
<ellipse cx="0" cy="0" rx="64.5" ry="68" transform="matrix(1 0.07 0 1 312 169.3)" fill="#0c62c8"/>
<path d="M322.0 106.0 C319.7 108.7 311.7 116.3 308.0 122.0 C304.3 127.7 301.7 134.0 300.0 140.0 C298.3 146.0 297.7 152.0 298.0 158.0 C298.3 164.0 299.8 170.3 302.0 176.0 C304.2 181.7 306.3 187.5 311.0 192.0 C315.7 196.5 323.2 200.7 330.0 203.0 C336.8 205.3 348.3 205.5 352.0 206.0" fill="none" stroke="#073c92" stroke-width="11" filter="url(#b4)" opacity="0.85"/>
<path d="M262.0 118.0 C265.3 116.0 275.0 108.5 282.0 106.0 C289.0 103.5 296.7 102.8 304.0 103.0 C311.3 103.2 319.3 104.5 326.0 107.0 C332.7 109.5 341.0 116.2 344.0 118.0" fill="none" stroke="#084aa6" stroke-width="7" filter="url(#b2)" opacity="0.7"/>
<path d="M275 220.2 L297.2 213.2 Q312 224 318 236 L300 246 L266 238 Z" fill="#0848a2"/>
<path d="M262 226 L275 220.2 L297.2 213.2 L300 216 L276 224 L268 232 Z" fill="#0a54b4"/>
<ellipse cx="352" cy="150" rx="48" ry="50.5" fill="url(#sky)"/>
</g>
<circle cx="301.7" cy="90.1" r="9.8" fill="#d6660c"/>
<circle cx="301.3" cy="90.4" r="6.4" fill="#a8520f"/>
<ellipse cx="300.3" cy="91.6" rx="4.4" ry="3.8" fill="#8e4a1c" opacity="0.75"/>
<ellipse cx="305.9" cy="88.9" rx="1.4" ry="2.8" transform="rotate(-18 305.9 88.9)" fill="#4c72c4" opacity="0.95"/>
<circle cx="368.9" cy="134.9" r="9.8" fill="#d6660c"/>
<circle cx="368.5" cy="135.2" r="6.4" fill="#a8520f"/>
<ellipse cx="367.5" cy="136.4" rx="4.4" ry="3.8" fill="#8e4a1c" opacity="0.75"/>
<ellipse cx="373.5" cy="133.5" rx="1.5" ry="3.5" transform="rotate(-20 373.5 133.5)" fill="#fff" opacity="0.97"/>
<circle cx="368.9" cy="216.4" r="9.8" fill="#d6660c"/>
<circle cx="368.5" cy="216.7" r="6.4" fill="#a8520f"/>
<ellipse cx="367.5" cy="217.9" rx="4.4" ry="3.8" fill="#8e4a1c" opacity="0.75"/>
<ellipse cx="373.1" cy="215.2" rx="1.4" ry="2.8" transform="rotate(-18 373.1 215.2)" fill="#4c72c4" opacity="0.95"/>
<circle cx="301.7" cy="253.1" r="9.8" fill="#d6660c"/>
<circle cx="301.3" cy="253.4" r="6.4" fill="#a8520f"/>
<ellipse cx="300.3" cy="254.6" rx="4.4" ry="3.8" fill="#8e4a1c" opacity="0.75"/>
<ellipse cx="305.3" cy="252.5" rx="1" ry="2" transform="rotate(-18 305.3 252.5)" fill="#6a74a4" opacity="0.8"/>
<circle cx="234.5" cy="208.3" r="9.8" fill="#d6660c"/>
<circle cx="234.1" cy="208.6" r="6.4" fill="#a8520f"/>
<ellipse cx="233.1" cy="209.8" rx="4.4" ry="3.8" fill="#8e4a1c" opacity="0.75"/>
<ellipse cx="238.1" cy="207.7" rx="1" ry="2" transform="rotate(-18 238.1 207.7)" fill="#6a74a4" opacity="0.8"/>
<circle cx="234.5" cy="126.8" r="9.8" fill="#d6660c"/>
<circle cx="234.1" cy="127.1" r="6.4" fill="#a8520f"/>
<ellipse cx="233.1" cy="128.3" rx="4.4" ry="3.8" fill="#8e4a1c" opacity="0.75"/>
<ellipse cx="238.1" cy="126.2" rx="1" ry="2" transform="rotate(-18 238.1 126.2)" fill="#6a74a4" opacity="0.8"/>
<path d="M449.6 53.3 L477.7 43 L506.6 44.5 L479.2 57 Z" fill="#0a5fc4"/>
<path d="M479.2 57 L506.6 44.5 L505.4 306.4 L486.8 320.6 L479.2 325.6 Z" fill="#0848a6"/>
<rect x="449.6" y="53.3" width="29.6" height="19.7" fill="#0a5fc4"/>
<rect x="449.6" y="72.7" width="29.6" height="6.6" fill="#12c866"/>
<rect x="449.6" y="79" width="29.6" height="22.9" fill="#d6680c"/>
<rect x="449.6" y="101.6" width="29.6" height="19.2" fill="#12c866"/>
<rect x="449.6" y="120.5" width="29.6" height="21.1" fill="#d6680c"/>
<rect x="449.6" y="141.3" width="29.6" height="61.4" fill="#12c866"/>
<rect x="449.6" y="202.4" width="29.6" height="21.4" fill="#d6680c"/>
<rect x="449.6" y="223.5" width="29.6" height="19.4" fill="#12c866"/>
<rect x="449.6" y="242.6" width="29.6" height="21.9" fill="#d6680c"/>
<rect x="449.6" y="264.2" width="29.6" height="8.7" fill="#12c866"/>
<rect x="449.6" y="272.6" width="29.6" height="29.3" fill="#0a5fc4"/>
<rect x="449.6" y="301.6" width="29.6" height="24.3" fill="#d6680c"/>
<path d="M449.6 53.3 L479.2 57 L479.2 74 L449.6 74 Z" fill="#0a5fc4"/>
<path d="M479.2 72.7 L497.2 67.5 L496.0 267.7 L479.2 272.6 Z" fill="#0ea455"/>
<path d="M479.2 79 L488.0 76.4 L488.0 99.0 L479.2 101.6 Z" fill="#b4580a"/>
<path d="M479.2 120.5 L488.0 117.9 L488.0 138.7 L479.2 141.3 Z" fill="#b4580a"/>
<path d="M479.2 202.4 L488.0 199.8 L488.0 220.9 L479.2 223.5 Z" fill="#b4580a"/>
<path d="M479.2 242.6 L488.0 240.0 L488.0 261.6 L479.2 264.2 Z" fill="#b4580a"/>
<path d="M479.2 301.6 L486.6 298.6 L486.6 320.8 L479.2 325.6 Z" fill="#b4580a"/>
<path d="M305.4 13 H315.2 V40 L311.6 46 Q310.3 47.2 309 46 L305.4 40 Z" fill="url(#noz)"/>
<path d="M492.8 282.7 H526.7 L538.5 300.5" stroke="#111" stroke-width="1.3" fill="none"/>
<circle cx="144.4" cy="74.3" r="9.5" fill="url(#num)"/>
<text x="144.4" y="79.0" text-anchor="middle" font-family="Liberation Sans, sans-serif" font-weight="bold" font-size="13.6" fill="#fff">1</text>
<circle cx="539.8" cy="96" r="9.5" fill="url(#num)"/>
<text x="539.8" y="100.7" text-anchor="middle" font-family="Liberation Sans, sans-serif" font-weight="bold" font-size="13.6" fill="#fff">2</text>
<circle cx="543.6" cy="309" r="9.5" fill="url(#num)"/>
<text x="543.6" y="313.7" text-anchor="middle" font-family="Liberation Sans, sans-serif" font-weight="bold" font-size="13.6" fill="#fff">3</text>
<text x="122" y="23.6" font-family="Liberation Sans, sans-serif" font-size="5.8" fill="#1a1a1a" stroke="#1a1a1a" stroke-width="0.2">Toolhead Number</text>
<rect x="122" y="27.0" width="8.3" height="7.6" fill="#1c6ac8"/>
<text x="132.6" y="33.8" font-family="Liberation Sans, sans-serif" font-size="5.8" fill="#1a1a1a" stroke="#1a1a1a" stroke-width="0.25">Tool 0</text>
<rect x="122" y="34.6" width="8.3" height="7.6" fill="#c87830"/>
<text x="132.6" y="41.4" font-family="Liberation Sans, sans-serif" font-size="5.8" fill="#1a1a1a" stroke="#1a1a1a" stroke-width="0.25">Tool 3</text>
<rect x="122" y="42.2" width="8.3" height="7.6" fill="#2cc07c"/>
<text x="132.6" y="49.0" font-family="Liberation Sans, sans-serif" font-size="5.8" fill="#1a1a1a" stroke="#1a1a1a" stroke-width="0.25">Tool 1</text>
<text x="328.8" y="23.3" font-family="Liberation Sans, sans-serif" font-size="5.8" fill="#1a1a1a" stroke="#1a1a1a" stroke-width="0.25">Preview Mode</text>
<text x="122" y="313.2" font-family="Liberation Sans, sans-serif" font-size="5.8" fill="#1a1a1a" stroke="#1a1a1a" stroke-width="0.25">Toolhead Position</text>
<text x="122" y="322.0" font-family="Liberation Sans, sans-serif" font-size="5.8" fill="#1a1a1a" stroke="#1a1a1a" stroke-width="0.25">X: 107.467</text>
<text x="122" y="330.8" font-family="Liberation Sans, sans-serif" font-size="5.8" fill="#1a1a1a" stroke="#1a1a1a" stroke-width="0.25">Y: 103.508</text>
<text x="122" y="339.6" font-family="Liberation Sans, sans-serif" font-size="5.8" fill="#1a1a1a" stroke="#1a1a1a" stroke-width="0.25">Z: 106.760</text>
</g></svg>
</body></html>
